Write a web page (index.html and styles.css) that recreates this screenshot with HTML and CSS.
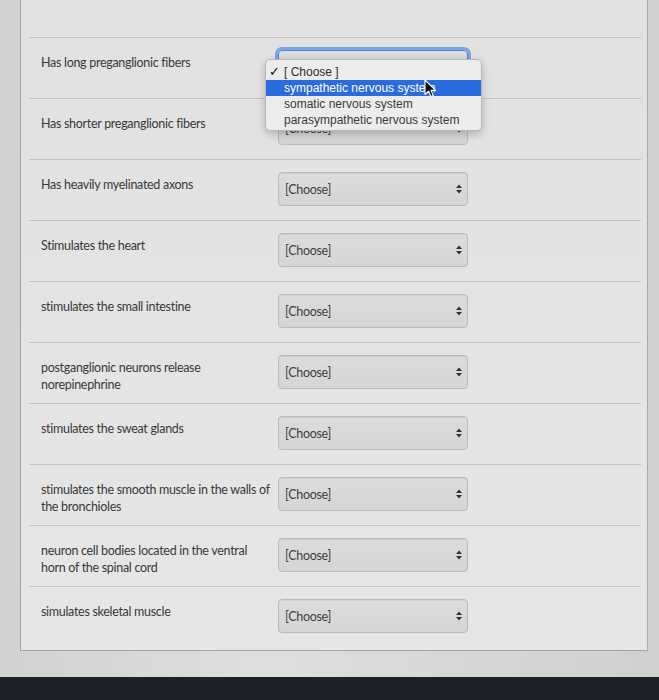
FILE: index.html
```html
<!DOCTYPE html>
<html lang="en">
<head>
    <meta charset="UTF-8">
    <title>Matching Question</title>
    <link rel="stylesheet" href="styles.css">
</head>
<body>
    <div class="quiz-card">

        <div class="match-row">
            <div class="match-label">Has long preganglionic fibers</div>
            <div class="fake-select is-focused">
                <span class="select-value"></span>
                <!-- open option list -->
                <ul class="select-menu">
                    <li class="menu-item is-checked"><span class="check">✓</span>[ Choose ]</li>
                    <li class="menu-item is-active">sympathetic nervous system</li>
                    <li class="menu-item">somatic nervous system</li>
                    <li class="menu-item">parasympathetic nervous system</li>
                    <svg class="cursor" viewBox="0 0 13 19" width="13" height="19">
                        <path d="M1 1 L1 15.5 L4.6 12.2 L7 17.6 L9.3 16.6 L7 11.4 L11.6 11.4 Z" fill="#111" stroke="#fff" stroke-width="1.1" stroke-linejoin="round"/>
                    </svg>
                </ul>
            </div>
        </div>

        <div class="match-row">
            <div class="match-label">Has shorter preganglionic fibers</div>
            <div class="fake-select">
                <span class="select-value">[Choose]</span>
                <svg class="arrows" viewBox="0 0 6 10" width="6" height="10"><path d="M0 4 L3 0.5 L6 4 Z M0 6 L3 9.5 L6 6 Z" fill="#333"/></svg>
            </div>
        </div>

        <div class="match-row">
            <div class="match-label">Has heavily myelinated axons</div>
            <div class="fake-select">
                <span class="select-value">[Choose]</span>
                <svg class="arrows" viewBox="0 0 6 10" width="6" height="10"><path d="M0 4 L3 0.5 L6 4 Z M0 6 L3 9.5 L6 6 Z" fill="#333"/></svg>
            </div>
        </div>

        <div class="match-row">
            <div class="match-label">Stimulates the heart</div>
            <div class="fake-select">
                <span class="select-value">[Choose]</span>
                <svg class="arrows" viewBox="0 0 6 10" width="6" height="10"><path d="M0 4 L3 0.5 L6 4 Z M0 6 L3 9.5 L6 6 Z" fill="#333"/></svg>
            </div>
        </div>

        <div class="match-row">
            <div class="match-label">stimulates the small intestine</div>
            <div class="fake-select">
                <span class="select-value">[Choose]</span>
                <svg class="arrows" viewBox="0 0 6 10" width="6" height="10"><path d="M0 4 L3 0.5 L6 4 Z M0 6 L3 9.5 L6 6 Z" fill="#333"/></svg>
            </div>
        </div>

        <div class="match-row">
            <div class="match-label">postganglionic neurons release norepinephrine</div>
            <div class="fake-select">
                <span class="select-value">[Choose]</span>
                <svg class="arrows" viewBox="0 0 6 10" width="6" height="10"><path d="M0 4 L3 0.5 L6 4 Z M0 6 L3 9.5 L6 6 Z" fill="#333"/></svg>
            </div>
        </div>

        <div class="match-row">
            <div class="match-label">stimulates the sweat glands</div>
            <div class="fake-select">
                <span class="select-value">[Choose]</span>
                <svg class="arrows" viewBox="0 0 6 10" width="6" height="10"><path d="M0 4 L3 0.5 L6 4 Z M0 6 L3 9.5 L6 6 Z" fill="#333"/></svg>
            </div>
        </div>

        <div class="match-row">
            <div class="match-label">stimulates the smooth muscle in the walls of the bronchioles</div>
            <div class="fake-select">
                <span class="select-value">[Choose]</span>
                <svg class="arrows" viewBox="0 0 6 10" width="6" height="10"><path d="M0 4 L3 0.5 L6 4 Z M0 6 L3 9.5 L6 6 Z" fill="#333"/></svg>
            </div>
        </div>

        <div class="match-row">
            <div class="match-label">neuron cell bodies located in the ventral horn of the spinal cord</div>
            <div class="fake-select">
                <span class="select-value">[Choose]</span>
                <svg class="arrows" viewBox="0 0 6 10" width="6" height="10"><path d="M0 4 L3 0.5 L6 4 Z M0 6 L3 9.5 L6 6 Z" fill="#333"/></svg>
            </div>
        </div>

        <div class="match-row">
            <div class="match-label">simulates skeletal muscle</div>
            <div class="fake-select">
                <span class="select-value">[Choose]</span>
                <svg class="arrows" viewBox="0 0 6 10" width="6" height="10"><path d="M0 4 L3 0.5 L6 4 Z M0 6 L3 9.5 L6 6 Z" fill="#333"/></svg>
            </div>
        </div>

    </div>

    <div class="taskbar"></div>
</body>
</html>
```

FILE: styles.css
```css
body {
    margin: 0;
    padding: 0;
    height: 700px;
    overflow: hidden;
    font-family: Lato, "Open Sans", sans-serif;
    background: linear-gradient(to right, #d2d2d2, #dedede 40%, #d0d0d0);
}

.quiz-card {
    box-sizing: border-box;
    width: 628px;
    height: 651px;
    margin-left: 20px;
    padding: 37px 6px 0 8px;
    background: linear-gradient(to bottom, #e1e1e1, #e4e4e4 60%, #e6e6e6);
    border-left: 1px solid #a2a2a2;
    border-right: 1px solid #ababab;
    border-bottom: 1px solid #a4a4a4;
}

.match-row {
    box-sizing: border-box;
    height: 61px;
    display: flex;
    align-items: flex-start;
    border-top: 1px solid #c3c3c3;
}

.match-label {
    box-sizing: border-box;
    flex: 0 0 249px;
    padding: 16px 8px 0 12px;
    font-size: 12.5px;
    line-height: 17px;
    letter-spacing: -0.3px;
    color: #393939;
}

.fake-select {
    position: relative;
    box-sizing: border-box;
    width: 190px;
    height: 34px;
    margin-top: 12px;
    padding: 0 5px 0 6px;
    display: flex;
    align-items: center;
    justify-content: space-between;
    background: linear-gradient(to bottom, #dcdcdc, #d5d5d5);
    border: 1px solid #bababa;
    border-radius: 4px;
    box-shadow: inset 0 1px 1px rgba(0, 0, 0, 0.06);
}

.select-value {
    font-size: 12.5px;
    letter-spacing: -0.3px;
    color: #3e3e3e;
}

.arrows {
    display: block;
}

.fake-select.is-focused {
    border-color: #4a86d6;
    box-shadow: 0 0 0 3px #79a5e2;
}

/* native-looking option list over the focused select */
.select-menu {
    position: absolute;
    left: -14px;
    top: 8px;
    box-sizing: border-box;
    width: 217px;
    height: 72px;
    margin: 0;
    padding: 4px 0 0 0;
    list-style: none;
    background: #ececec;
    border: 1px solid #b8b8b8;
    border-radius: 5px;
    box-shadow: 0 3px 9px rgba(0, 0, 0, 0.22);
    z-index: 5;
}

.menu-item {
    position: relative;
    height: 16px;
    line-height: 16px;
    padding-left: 18px;
    font-family: "Liberation Sans", Arial, sans-serif;
    font-size: 12px;
    color: #3a3a3a;
}

.menu-item.is-checked {
    color: #2e2e2e;
}

.check {
    position: absolute;
    left: 3px;
    top: 0;
    font-family: "DejaVu Sans", sans-serif;
    font-size: 13px;
    font-weight: bold;
    color: #111;
}

.menu-item.is-active {
    background: #2a6cdd;
    color: #ffffff;
}

.cursor {
    position: absolute;
    left: 158px;
    top: 19px;
}

.taskbar {
    height: 23px;
    margin-top: 26px;
    background: #1d2127;
}
```
